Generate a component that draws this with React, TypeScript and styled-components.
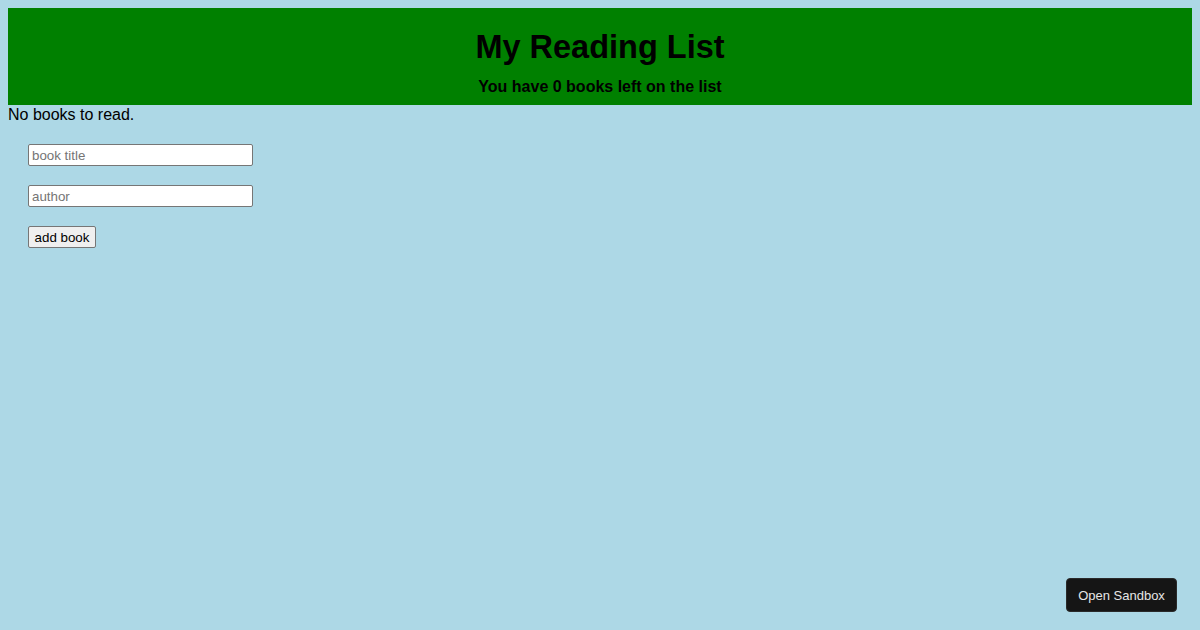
import { useState } from 'react'
import styled, { createGlobalStyle } from 'styled-components'

const GlobalStyle = createGlobalStyle`
  html, body {
    background-color: #add8e6;
  }
  body {
    margin: 8px;
    font-family: 'Liberation Sans', Arial, sans-serif;
    color: #000;
  }
`

const Navbar = styled.div`
  background-color: #008000;
  text-align: center;
  padding: 21px 20px 9px;
`
const Title = styled.h1`
  margin: 0 0 12px;
  font-size: 32.5px;
  font-weight: bold;
`
const Subtitle = styled.p`
  margin: 0;
  font-size: 16px;
  font-weight: bold;
`

const Empty = styled.div`
  padding-top: 1px;
  font-size: 16px;
`

const BookForm = styled.form`
  padding: 20px;
  display: flex;
  flex-direction: column;
  align-items: flex-start;
  gap: 19px;
`
const TextInput = styled.input`
  box-sizing: border-box;
  width: 225px;
  height: 22px;
  padding: 1px 3px;
  border: 1px solid #767676;
  border-radius: 2px;
  background: #fff;
  font-family: 'Liberation Sans', Arial, sans-serif;
  font-size: 13.33px;
  &::placeholder {
    color: #757575;
  }
`
const SubmitButton = styled.button`
  box-sizing: border-box;
  width: 68px;
  height: 22px;
  padding: 1px 0;
  border: 1px solid #767676;
  border-radius: 2px;
  background: #efefef;
  font-family: 'Liberation Sans', Arial, sans-serif;
  font-size: 13.33px;
  color: #000;
`

const SandboxButton = styled.button`
  position: fixed;
  right: 23px;
  bottom: 18px;
  width: 111px;
  height: 34px;
  border: 1px solid #2a2a2a;
  border-radius: 4px;
  background: #151515;
  color: #e6e6e6;
  font-family: 'Liberation Sans', Arial, sans-serif;
  font-size: 13px;
  cursor: pointer;
`

function App() {
  const [title, setTitle] = useState('')
  const [author, setAuthor] = useState('')

  return (
    <>
      <GlobalStyle />
      <Navbar>
        <Title>My Reading List</Title>
        <Subtitle>You have 0 books left on the list</Subtitle>
      </Navbar>
      <Empty>No books to read.</Empty>
      <BookForm onSubmit={(e) => e.preventDefault()}>
        <TextInput
          type="text"
          placeholder="book title"
          value={title}
          onChange={(e) => setTitle(e.target.value)}
        />
        <TextInput
          type="text"
          placeholder="author"
          value={author}
          onChange={(e) => setAuthor(e.target.value)}
        />
        <SubmitButton type="submit">add book</SubmitButton>
      </BookForm>
      <SandboxButton>Open Sandbox</SandboxButton>
    </>
  )
}

export default App
